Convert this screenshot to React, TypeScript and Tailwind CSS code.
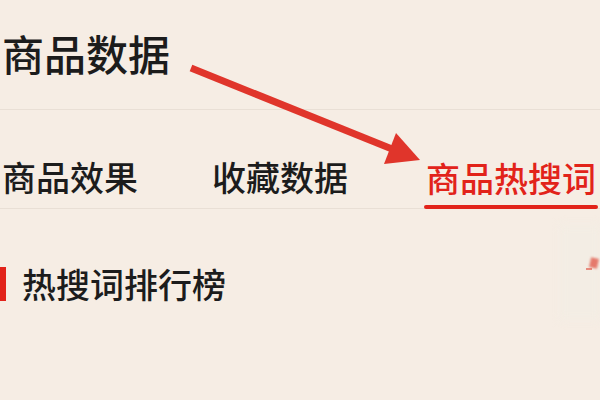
import React from "react";

const font = { fontFamily: '"Noto Sans CJK SC", "Noto Sans", sans-serif' };

export default function App() {
  return (
    <div
      className="relative w-[600px] h-[400px] overflow-hidden bg-[#f6ede4] text-[#1c1c1c] font-medium"
      style={font}
    >
      <div className="flex items-center h-[110px] border-b border-[#e9dfd5] pl-[2px] pb-[3px]">
        <span className="text-[42px] leading-[42px]">商品数据</span>
      </div>

      <div className="flex items-end border-b border-[#e9dfd5] pt-[50px]">
        <div className="flex flex-col ml-[2px]">
          <span className="text-[34px] leading-[34px]">商品效果</span>
          <div className="mt-[10px] h-[4px]" />
        </div>
        <div className="flex flex-col ml-[74px]">
          <span className="text-[34px] leading-[34px]">收藏数据</span>
          <div className="mt-[10px] h-[4px]" />
        </div>
        <div className="flex flex-col ml-[76px]">
          <span className="text-[34px] leading-[34px] text-[#e2231a] px-[2px]">商品热搜词</span>
          <div className="mt-[10px] h-[4px] -mb-[1px] rounded-full bg-[#e2231a]" />
        </div>
      </div>

      <div className="flex items-center mt-[58px] gap-[16px]">
        <div className="w-[6px] h-[34px] bg-[#e2231a]" />
        <span className="text-[34px] leading-[34px]">热搜词排行榜</span>
      </div>

      <div className="absolute right-0 top-[225px] w-[40px] h-[95px] bg-[#f3ede4] blur-[4px]" />
      <div className="absolute left-[590px] top-[258px] w-[8px] h-[10px] bg-[#e04a3a] opacity-70 blur-[1px] rotate-12" />
      <div className="absolute left-[586px] top-[268px] w-[6px] h-[2px] bg-[#e04a3a] opacity-60" />

      <svg className="absolute left-0 top-0 pointer-events-none" width="600" height="400">
        <line x1="191" y1="68" x2="392" y2="149" stroke="#e0352b" strokeWidth="7" />
        <polygon points="396,133 384,164 420,160" fill="#e0352b" />
      </svg>
    </div>
  );
}
